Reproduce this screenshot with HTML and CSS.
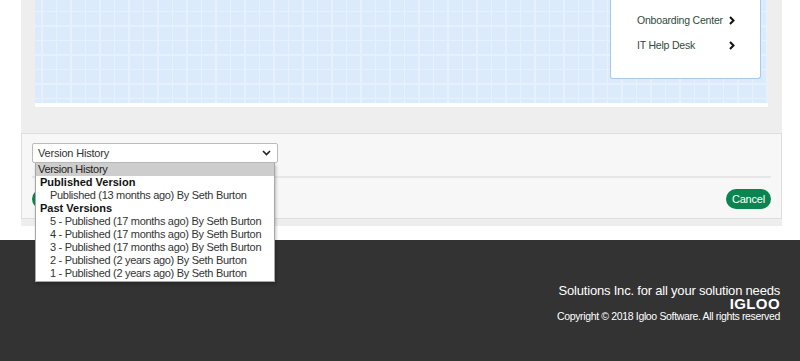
FILE: index.html
```html
<!DOCTYPE html>
<html lang="en">
<head>
<meta charset="UTF-8">
<meta name="viewport" content="width=device-width, initial-scale=1.0">
<title>Version History</title>
<link rel="stylesheet" href="styles.css">
</head>
<body>
    <div class="page">
        <div class="canvas">
            <div class="grid">
                <div class="links">
                    <a class="link" href="#">Onboarding Center <svg class="chev" width="6" height="9" viewBox="0 0 6 9"><path d="M1 1 L4.5 4.5 L1 8" fill="none" stroke="#111" stroke-width="2"/></svg></a>
                    <a class="link" href="#">IT Help Desk <svg class="chev" width="6" height="9" viewBox="0 0 6 9"><path d="M1 1 L4.5 4.5 L1 8" fill="none" stroke="#111" stroke-width="2"/></svg></a>
                </div>
            </div>
        </div>
        <div class="panel">
            <div class="picker">
                <div class="select">
                    <span>Version History</span>
                    <svg width="9" height="6" viewBox="0 0 9 6"><path d="M1 1 L4.5 4.5 L8 1" fill="none" stroke="#222" stroke-width="1.6"/></svg>
                </div>
                <div class="dropdown">
                    <div class="opt current">Version History</div>
                    <div class="group">Published Version</div>
                    <div class="opt sub">Published (13 months ago) By Seth Burton</div>
                    <div class="group">Past Versions</div>
                    <div class="opt sub">5 - Published (17 months ago) By Seth Burton</div>
                    <div class="opt sub">4 - Published (17 months ago) By Seth Burton</div>
                    <div class="opt sub">3 - Published (17 months ago) By Seth Burton</div>
                    <div class="opt sub">2 - Published (2 years ago) By Seth Burton</div>
                    <div class="opt sub">1 - Published (2 years ago) By Seth Burton</div>
                </div>
            </div>
            <div class="actions">
                <button class="btn">Publish</button>
                <button class="btn">Cancel</button>
            </div>
        </div>
        <div class="strip"></div>
    </div>
    <div class="footer">
        <p class="tagline">Solutions Inc. for all your solution needs</p>
        <p class="brand">IGLOO</p>
        <p class="copy">Copyright &copy; 2018 Igloo Software. All rights reserved</p>
    </div>
</body>
</html>
```

FILE: styles.css
```css
body {
    margin: 0;
    padding: 0;
    font-family: "Liberation Sans", Arial, sans-serif;
    background: #fff;
}
.page {
    margin-left: 21px;
    width: 761px;
}
.canvas {
    background: #eeeeee;
    padding: 0 14px 26px;
}
.grid {
    height: 103px;
    border-bottom: 4px solid #fff;
    background-color: #dcebfc;
    background-image:
        repeating-linear-gradient(90deg, transparent 0, transparent 6px, #e7f1fd 6px, #e7f1fd 7.5px, transparent 7.5px, transparent 14.5px),
        repeating-linear-gradient(0deg, transparent 0, transparent 4px, #e7f1fd 4px, #e7f1fd 5.5px, transparent 5.5px, transparent 14.5px);
    display: flex;
    justify-content: flex-end;
    padding-right: 7px;
}
.links {
    width: 151px;
    height: 79px;
    background: #fff;
    border: 1.5px solid #a9c9ea;
    border-top: none;
    border-radius: 0 0 3px 3px;
    padding: 14px 0 0 26px;
    box-sizing: border-box;
}
.link {
    display: flex;
    justify-content: space-between;
    align-items: center;
    width: 98px;
    font-size: 10.5px;
    letter-spacing: -0.2px;
    white-space: nowrap;
    color: #2f4a3c;
    text-decoration: none;
    line-height: 13px;
    margin-bottom: 12px;
}
.panel {
    background: #f7f7f7;
    border: 1px solid #dedede;
    padding: 9px 10px;
    box-sizing: border-box;
    height: 86px;
}
.picker {
    position: relative;
    width: 246px;
}
.select {
    height: 20px;
    box-sizing: border-box;
    border: 1px solid #bbb;
    border-radius: 2px;
    background: #fff;
    font-size: 11px;
    letter-spacing: -0.2px;
    color: #333;
    padding: 0 6px 0 5px;
    display: flex;
    align-items: center;
    justify-content: space-between;
}
.dropdown {
    position: absolute;
    top: 100%;
    left: 3px;
    width: 240px;
    background: #fff;
    border: 1px solid #a8a8a8;
    border-top: none;
    box-sizing: border-box;
    box-shadow: 1px 2px 3px rgba(0, 0, 0, 0.25);
    font-size: 11px;
    letter-spacing: -0.3px;
    line-height: 13px;
    color: #333;
    z-index: 2;
    padding-bottom: 1px;
}
.opt {
    padding-left: 2px;
    white-space: nowrap;
}
.current {
    background: #cdcdcd;
    color: #222;
}
.group {
    font-weight: bold;
    color: #111;
    padding-left: 4px;
    letter-spacing: 0;
}
.sub {
    padding-left: 14px;
}
.actions {
    margin-top: 13px;
    border-top: 2px solid #e6e6e6;
    padding-top: 11px;
    display: flex;
    justify-content: space-between;
}
.btn {
    background: #0a8550;
    color: #fff;
    border: none;
    border-radius: 10px;
    height: 20px;
    padding: 0 6px;
    font-family: "Liberation Sans", Arial, sans-serif;
    font-size: 11px;
    letter-spacing: -0.2px;
}
.strip {
    height: 7px;
    background: #eeeeee;
}
.footer {
    margin-top: 14px;
    background: #333333;
    height: 121px;
    padding: 44px 20px 0 0;
    box-sizing: border-box;
    text-align: right;
    color: #fff;
}
.footer p {
    margin: 0;
}
.tagline {
    font-size: 13px;
    line-height: 13px;
    letter-spacing: -0.2px;
}
.brand {
    font-size: 15px;
    font-weight: bold;
    line-height: 13px;
    letter-spacing: 0.4px;
    margin-right: -1px;
}
.copy {
    font-size: 10.5px;
    line-height: 12px;
    letter-spacing: -0.35px;
    margin-right: -1px;
}
```
